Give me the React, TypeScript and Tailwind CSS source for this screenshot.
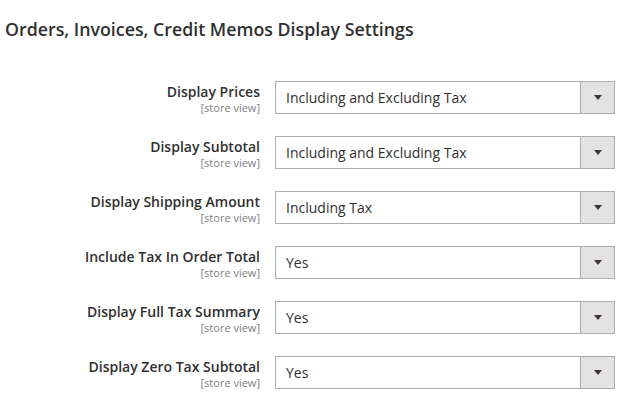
import React from "react";

const rows = [
  { label: "Display Prices", value: "Including and Excluding Tax" },
  { label: "Display Subtotal", value: "Including and Excluding Tax" },
  { label: "Display Shipping Amount", value: "Including Tax" },
  { label: "Include Tax In Order Total", value: "Yes" },
  { label: "Display Full Tax Summary", value: "Yes" },
  { label: "Display Zero Tax Subtotal", value: "Yes" },
];

export default function App() {
  return (
    <div
      className="w-[636px] h-[410px] bg-white text-[#303030] overflow-hidden"
      style={{ fontFamily: '"Open Sans", "Liberation Sans", sans-serif' }}
    >
      <h2 className="pl-[5px] pt-[17px] text-[17.8px] leading-[24px] font-semibold text-[#303030]">
        Orders, Invoices, Credit Memos Display Settings
      </h2>
      <div className="mt-[40px] flex flex-col gap-[22px]">
        {rows.map((r) => (
          <div key={r.label} className="flex items-start h-[33px]">
            <div className="w-[260px] shrink-0 text-right pt-[1px]">
              <div className="text-[14px] leading-[19px] font-semibold text-[#303030]">{r.label}</div>
              <div className="text-[11px] leading-[15px] -mt-[1px] text-[#808080]">[store view]</div>
            </div>
            <div className="ml-[15px] w-[340px] h-[33px] flex border border-[#adadad] bg-white">
              <div className="flex-1 pl-[10px] flex items-center text-[14px] text-[#303030]">{r.value}</div>
              <div className="w-[34px] h-full bg-[#e3e3e3] border-l border-[#adadad] flex items-center justify-center">
                <svg width="8" height="5" viewBox="0 0 8 5">
                  <path d="M0 0 L8 0 L4 5 Z" fill="#41362f" />
                </svg>
              </div>
            </div>
          </div>
        ))}
      </div>
    </div>
  );
}
